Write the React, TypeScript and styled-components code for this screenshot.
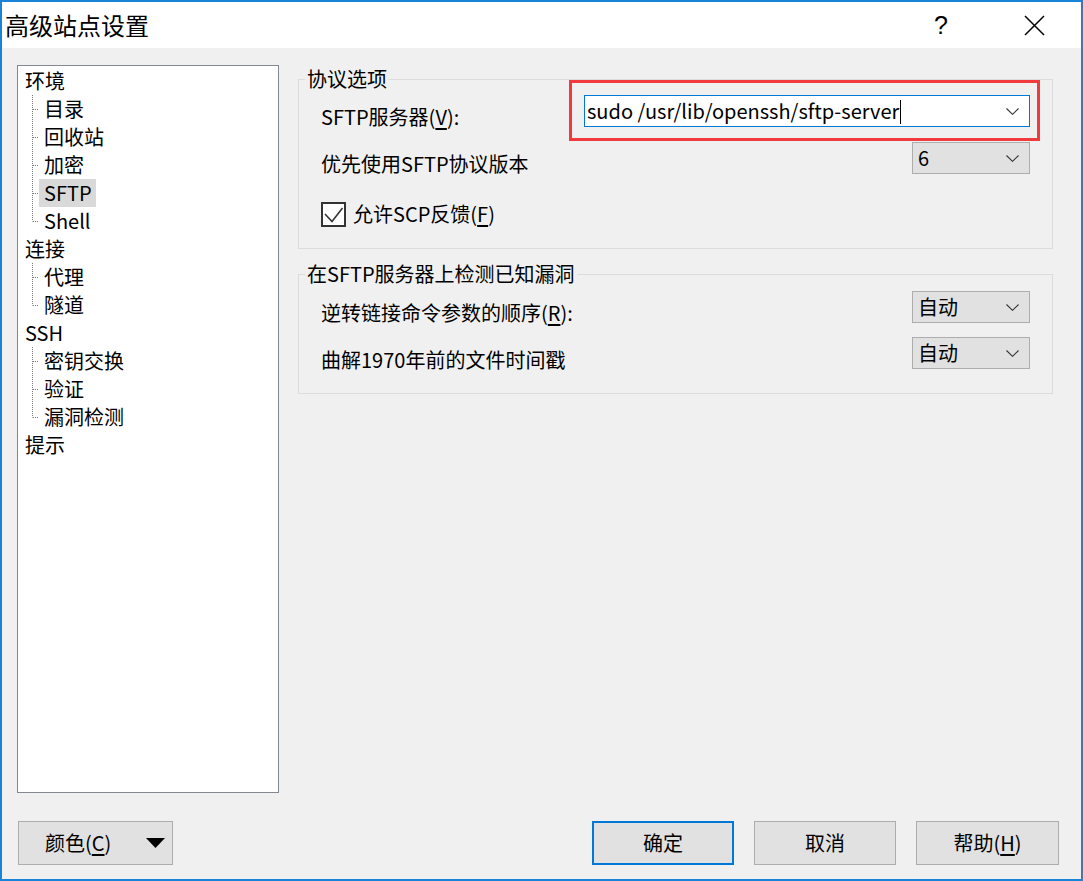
import { Fragment } from "react";
import styled, { createGlobalStyle } from "styled-components";

const GlobalStyle = createGlobalStyle`
  html, body {
    margin: 0;
    padding: 0;
    background: #ffffff;
  }
  body {
    font-family: "Noto Sans CJK SC", "Liberation Sans", sans-serif;
  }
`;

const Window = styled.div`
  width: 1083px;
  height: 881px;
  box-sizing: border-box;
  border: 2px solid #1883d7;
  background: #f0f0f0;
  display: flex;
  flex-direction: column;
  font-size: 20px;
  line-height: 28px;
  color: #000;
`;

const TitleBar = styled.div`
  height: 46px;
  flex: none;
  background: #ffffff;
  display: flex;
  align-items: center;
  padding-left: 3px;

  h1 {
    margin: 0;
    flex: 1;
    font-size: 24px;
    font-weight: normal;
    line-height: 30px;
  }
`;

const TitleButton = styled.div<{ $gap?: number }>`
  width: 40px;
  height: 46px;
  display: flex;
  align-items: center;
  justify-content: center;
  margin-right: ${(p) => p.$gap ?? 0}px;
  font-family: "Liberation Sans", sans-serif;
  font-size: 25px;
`;

const Body = styled.div`
  flex: 1;
  display: flex;
  flex-direction: column;
  padding: 17px 22px 14px 15px;
`;

const Main = styled.div`
  display: flex;
  height: 728px;
`;

const Tree = styled.ul`
  list-style: none;
  margin: 0;
  width: 262px;
  box-sizing: border-box;
  border: 1px solid #828790;
  background: #ffffff;
  padding: 1px 0 0;
`;

const TreeRow = styled.li<{ $child?: boolean }>`
  height: 28px;
  display: flex;
  align-items: center;
  padding-left: ${(p) => (p.$child ? 14 : 7)}px;
`;

const TreeLabel = styled.span<{ $selected?: boolean; $child?: boolean }>`
  height: 28px;
  padding: 0 4px 0 ${(p) => (p.$child ? 5 : 0)}px;
  background: ${(p) => (p.$selected ? "#d9d9d9" : "transparent")};
  white-space: nowrap;
`;

const Right = styled.div`
  margin-left: 19px;
  width: 755px;
  display: flex;
  flex-direction: column;
  gap: 11px;
`;

const Group = styled.fieldset`
  margin: 0;
  padding: 0;
  border: 1px solid #dcdcdc;
  min-inline-size: 0;

  legend {
    margin-left: 6px;
    padding: 0 2px;
    line-height: 28px;
  }
`;

const GroupBody = styled.div<{ $bottom: number }>`
  padding: 0 22px ${(p) => p.$bottom}px 22px;
`;

const Row = styled.div<{ $height: number }>`
  height: ${(p) => p.$height}px;
  display: flex;
  justify-content: space-between;
  align-items: flex-start;
`;

const Label = styled.span<{ $top: number }>`
  margin-top: ${(p) => p.$top}px;
  white-space: nowrap;

  u {
    text-underline-offset: 3px;
  }
`;

const Highlight = styled.div<{ $top: number }>`
  position: relative;
  margin-top: ${(p) => p.$top}px;

  &::after {
    content: "";
    position: absolute;
    top: -15px;
    left: -15px;
    right: -10px;
    bottom: -14px;
    border: 3px solid #f03a3e;
    pointer-events: none;
  }
`;

const Dropdown = styled.div<{ $width: number; $editable?: boolean; $top?: number }>`
  width: ${(p) => p.$width}px;
  height: 32px;
  box-sizing: border-box;
  margin-top: ${(p) => p.$top ?? 0}px;
  border: 1px solid ${(p) => (p.$editable ? "#0078d7" : "#adadad")};
  background: ${(p) => (p.$editable ? "#ffffff" : "#e1e1e1")};
  display: flex;
  align-items: center;
  padding: 0 10px 0 ${(p) => (p.$editable ? 2 : 5)}px;

  span {
    flex: 1;
    white-space: nowrap;
  }
`;

const Caret = styled.i`
  display: inline-block;
  width: 1px;
  height: 24px;
  background: #000;
  vertical-align: middle;
  margin-left: 1px;
  margin-top: -3px;
`;

const CheckRow = styled.label`
  margin-top: 11px;
  display: flex;
  align-items: center;
  gap: 7px;

  u {
    text-underline-offset: 3px;
  }
`;

const CheckBox = styled.span`
  width: 25px;
  height: 25px;
  box-sizing: border-box;
  border: 2px solid #333333;
  background: #ffffff;
  display: flex;
  align-items: center;
  justify-content: center;
`;

const Footer = styled.div`
  margin-top: 28px;
  padding-left: 1px;
  display: flex;
  justify-content: space-between;
`;

const ButtonGroup = styled.div`
  display: flex;
  gap: 20px;
`;

const Button = styled.button<{ $primary?: boolean; $width?: number }>`
  width: ${(p) => p.$width ?? 142}px;
  height: 44px;
  box-sizing: border-box;
  border: ${(p) => (p.$primary ? "2px solid #0078d7" : "1px solid #adadad")};
  background: #e1e1e1;
  font: inherit;
  color: #000;
  padding: 0;
  display: flex;
  align-items: center;
  justify-content: center;

  u {
    text-underline-offset: 3px;
  }
`;

const SplitButton = styled(Button)`
  justify-content: space-between;
  padding: 0 7px 0 26px;
`;

const Chevron = () => (
  <svg width="13" height="7" viewBox="0 0 13 7">
    <polyline points="0.5,0.5 6.5,6.3 12.5,0.5" fill="none" stroke="#333" strokeWidth="1.1" />
  </svg>
);

const Connector = ({ last }: { last?: boolean }) => (
  <svg width="7" height="28" viewBox="0 0 7 28" style={{ flex: "none" }}>
    <line x1="0.5" y1="0" x2="0.5" y2={last ? 14.5 : 28} stroke="#7a7a7a" strokeDasharray="1 1" />
    <line x1="1" y1="14.5" x2="7" y2="14.5" stroke="#7a7a7a" strokeDasharray="1 1" />
  </svg>
);

type Node = { label: string; children?: string[] };

const tree: Node[] = [
  { label: "环境", children: ["目录", "回收站", "加密", "SFTP", "Shell"] },
  { label: "连接", children: ["代理", "隧道"] },
  { label: "SSH", children: ["密钥交换", "验证", "漏洞检测"] },
  { label: "提示" },
];

const App = () => {
  return (
    <Window>
      <GlobalStyle />
      <TitleBar>
        <h1>高级站点设置</h1>
        <TitleButton $gap={53}>?</TitleButton>
        <TitleButton $gap={27}>
          <svg width="21" height="21" viewBox="0 0 21 21">
            <path d="M1 1 L20 20 M20 1 L1 20" stroke="#000" strokeWidth="1.5" />
          </svg>
        </TitleButton>
      </TitleBar>
      <Body>
        <Main>
          <Tree>
            {tree.map((node) => (
              <Fragment key={node.label}>
                <TreeRow>
                  <TreeLabel>{node.label}</TreeLabel>
                </TreeRow>
                {node.children?.map((child, i) => (
                  <TreeRow key={child} $child>
                    <Connector last={i === node.children!.length - 1} />
                    <TreeLabel $child $selected={child === "SFTP"}>
                      {child}
                    </TreeLabel>
                  </TreeRow>
                ))}
              </Fragment>
            ))}
          </Tree>
          <Right>
            <Group>
              <legend>协议选项</legend>
              <GroupBody $bottom={20}>
                <Row $height={48}>
                  <Label $top={10}>
                    SFTP服务器(<u>V</u>):
                  </Label>
                  <Highlight $top={2}>
                    <Dropdown $width={446} $editable>
                      <span>
                        sudo /usr/lib/openssh/sftp-server
                        <Caret />
                      </span>
                      <Chevron />
                    </Dropdown>
                  </Highlight>
                </Row>
                <Row $height={48}>
                  <Label $top={9}>优先使用SFTP协议版本</Label>
                  <Dropdown $width={118} $top={1}>
                    <span>6</span>
                    <Chevron />
                  </Dropdown>
                </Row>
                <CheckRow>
                  <CheckBox>
                    <svg width="21" height="21" viewBox="0 0 21 21">
                      <polyline points="2,10 9,17.5 19.5,4" fill="none" stroke="#333" strokeWidth="1.6" />
                    </svg>
                  </CheckBox>
                  <span>
                    允许SCP反馈(<u>F</u>)
                  </span>
                </CheckRow>
              </GroupBody>
            </Group>
            <Group>
              <legend>在SFTP服务器上检测已知漏洞</legend>
              <GroupBody $bottom={0}>
                <Row $height={46}>
                  <Label $top={11}>
                    逆转链接命令参数的顺序(<u>R</u>):
                  </Label>
                  <Dropdown $width={118} $top={3}>
                    <span>自动</span>
                    <Chevron />
                  </Dropdown>
                </Row>
                <Row $height={59}>
                  <Label $top={12}>曲解1970年前的文件时间戳</Label>
                  <Dropdown $width={118} $top={3}>
                    <span>自动</span>
                    <Chevron />
                  </Dropdown>
                </Row>
              </GroupBody>
            </Group>
          </Right>
        </Main>
        <Footer>
          <SplitButton $width={155}>
            <span>
              颜色(<u>C</u>)
            </span>
            <svg width="19" height="10" viewBox="0 0 19 10">
              <polygon points="0,0 19,0 9.5,10" fill="#000" />
            </svg>
          </SplitButton>
          <ButtonGroup>
            <Button $primary>确定</Button>
            <Button>取消</Button>
            <Button $width={143}>
              帮助(<u>H</u>)
            </Button>
          </ButtonGroup>
        </Footer>
      </Body>
    </Window>
  );
};

export default App;
